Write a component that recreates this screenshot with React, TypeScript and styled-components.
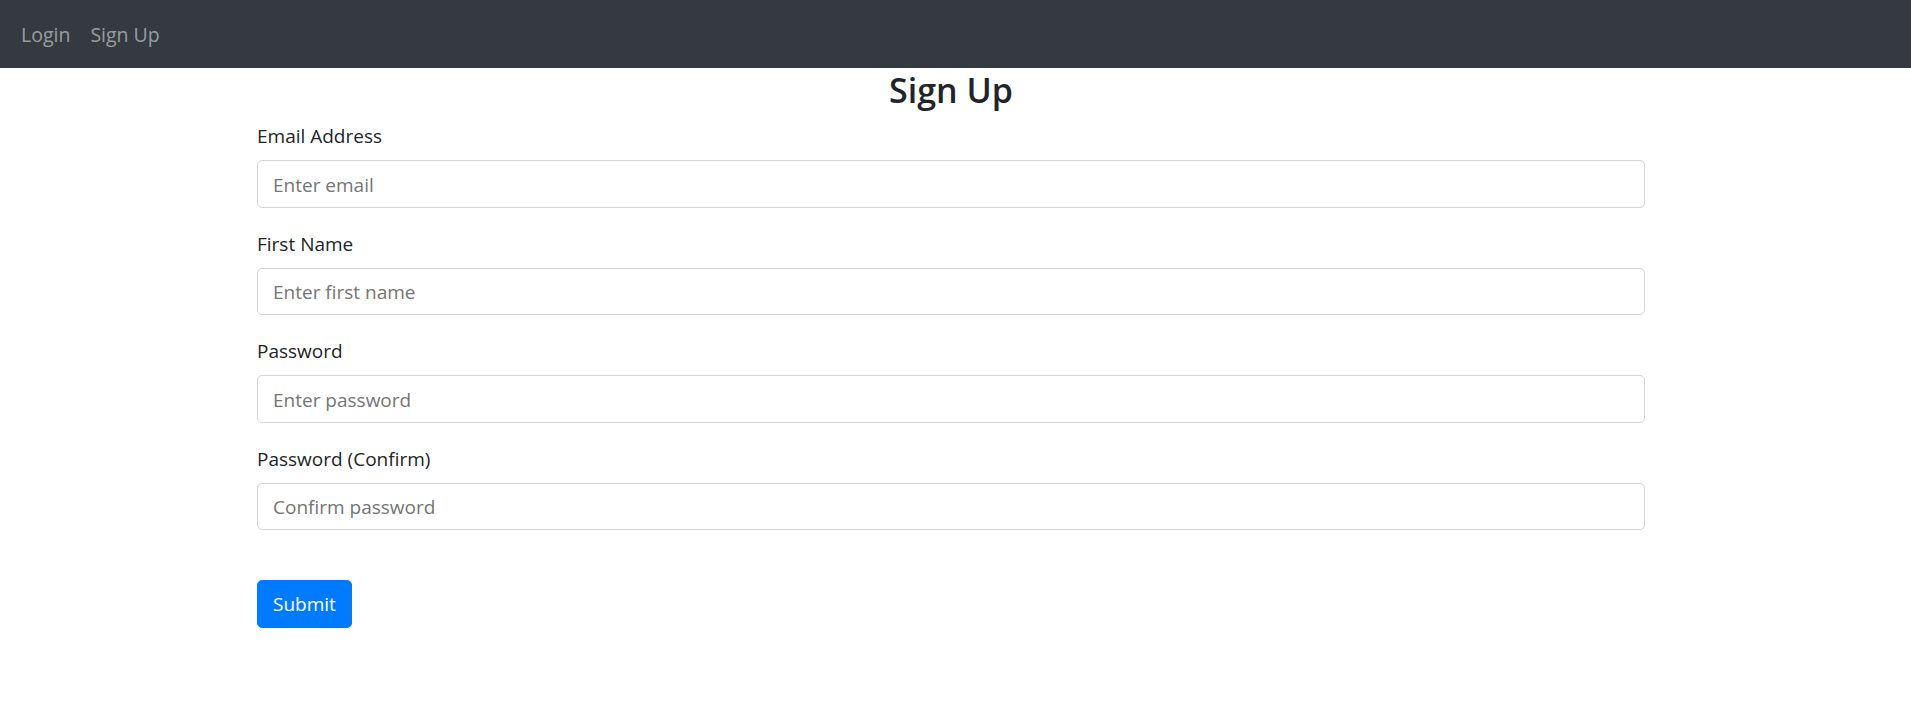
import styled, { createGlobalStyle } from "styled-components";

const GlobalStyle = createGlobalStyle`
  * {
    box-sizing: border-box;
  }

  body {
    margin: 0;
    background: #fff;
    color: #212529;
    font-family: "Open Sans", "Noto Sans", "Liberation Sans", sans-serif;
    font-size: 19px;
    line-height: 30px;
  }
`;

const NavBar = styled.nav`
  display: flex;
  align-items: center;
  height: 68px;
  padding: 1px 11px 0;
  background-color: #343a40;
`;

const NavLink = styled.a`
  padding: 0 10px;
  color: rgba(255, 255, 255, 0.5);
  font-size: 19.5px;
  text-decoration: none;
  cursor: pointer;

  :hover {
    color: rgba(255, 255, 255, 0.75);
  }
`;

const Container = styled.main`
  width: 1388px;
  margin-left: 257px;
`;

const Title = styled.h3`
  margin: 0 0 10px;
  padding-top: 1px;
  height: 42px;
  text-align: center;
  font-size: 34px;
  font-weight: 600;
  line-height: 42px;
`;

const FormGroup = styled.div`
  margin-bottom: 20px;

  & label {
    display: block;
    height: 30px;
    padding-top: 1px;
    margin-bottom: 10px;
  }
`;

const Controller = styled.input`
  display: block;
  width: 100%;
  height: 47.5px;
  padding: 8.5px 15px 6.5px;
  border: 1px solid #ced4da;
  border-radius: 5px;
  font-family: inherit;
  font-size: 19px;
  color: #495057;
  background: #fff;

  ::placeholder {
    color: #6c757d;
    opacity: 1;
  }

  :focus {
    outline: none;
    border-color: #80bdff;
    box-shadow: 0 0 0 4px rgba(0, 123, 255, 0.25);
  }
`;

const SubmitButton = styled.button`
  display: inline-block;
  margin-top: 30px;
  height: 47.5px;
  padding: 1px 15px 0;
  border: 1px solid #007bff;
  border-radius: 5px;
  background-color: #007bff;
  color: #fff;
  font-family: inherit;
  font-size: 19px;
  line-height: 30px;
  cursor: pointer;

  :hover {
    background-color: #0069d9;
  }
`;

const fields = [
  { id: "email", label: "Email Address", type: "email", placeholder: "Enter email" },
  { id: "firstName", label: "First Name", type: "text", placeholder: "Enter first name" },
  { id: "password", label: "Password", type: "password", placeholder: "Enter password" },
  { id: "password2", label: "Password (Confirm)", type: "password", placeholder: "Confirm password" },
];

const App = () => {
  return (
    <>
      <GlobalStyle />
      <NavBar>
        <NavLink href="#login">Login</NavLink>
        <NavLink href="#signup">Sign Up</NavLink>
      </NavBar>
      <Container>
        <Title>Sign Up</Title>
        <form onSubmit={(e) => e.preventDefault()}>
          {fields.map((f) => (
            <FormGroup key={f.id}>
              <label htmlFor={f.id}>{f.label}</label>
              <Controller id={f.id} type={f.type} placeholder={f.placeholder} />
            </FormGroup>
          ))}
          <SubmitButton type="submit">Submit</SubmitButton>
        </form>
      </Container>
    </>
  );
};

export default App;
